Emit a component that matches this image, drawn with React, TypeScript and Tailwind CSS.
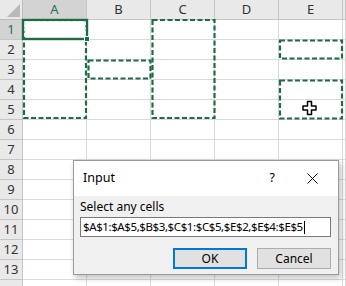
import React from 'react';

const cols = ['A', 'B', 'C', 'D', 'E', ''];
const rows = Array.from({ length: 14 }, (_, i) => i + 1);

function HeaderRow() {
  return (
    <>
      <div className="relative h-5 border-r border-b border-[#bdbdbd] bg-[#e9e9e9]">
        <svg className="absolute right-[2px] bottom-[2px]" width="13" height="13">
          <polygon points="13,0 13,13 0,13" fill="#b9b9b9" />
        </svg>
      </div>
      {cols.map((c, i) => (
        <div
          key={i}
          className={`flex h-5 items-center justify-center border-r border-b border-[#c6c6c6] text-[13px] ${
            c === 'A' ? 'bg-[#d3d3d3] text-[#217346]' : 'bg-[#e9e9e9] text-[#333]'
          }`}
        >
          {c}
        </div>
      ))}
    </>
  );
}

function Row({ n }: { n: number }) {
  return (
    <>
      <div
        className={`flex h-5 items-center justify-center border-r border-b border-[#c6c6c6] text-[13px] ${
          n === 1 ? 'bg-[#d3d3d3] text-[#217346]' : 'bg-[#e9e9e9] text-[#333]'
        }`}
      >
        {n < 14 ? n : ''}
      </div>
      {cols.map((_, i) => (
        <div key={i} className="h-5 border-r border-b border-[#dadada] bg-white" />
      ))}
    </>
  );
}

function MarchingAnts() {
  const green = '#1f6b45';
  const dash = '5 2.5';
  return (
    <svg className="pointer-events-none absolute left-0 top-0" width="346" height="286">
      <g fill="none" stroke={green} strokeWidth="2.2" strokeDasharray={dash}>
        <rect x="24" y="20" width="62" height="98" />
        <rect x="88.5" y="60.5" width="62" height="18" />
        <rect x="152.5" y="20" width="62" height="98" />
        <rect x="280" y="40.5" width="62" height="18" />
        <rect x="280" y="80.5" width="62" height="38" />
      </g>
      {/* active cell */}
      <rect x="23" y="20" width="64" height="19" fill="none" stroke={green} strokeWidth="2.4" />
      <path d="M24.5 21.5 H85.5 V37 M24.5 21.5 V37" fill="none" stroke="#fff" strokeWidth="0.8" strokeDasharray="4 2" />
      <rect x="84.5" y="36.5" width="5" height="5" fill={green} stroke="#fff" strokeWidth="1" />
      {/* cursor */}
      <path
        d="M307.5 101.5 h4 v4.5 h4.5 v4 h-4.5 v4.5 h-4 v-4.5 h-4.5 v-4 h4.5 z"
        fill="#fff"
        stroke="#000"
        strokeWidth="1.5"
        strokeLinejoin="round"
      />
    </svg>
  );
}

function Dialog() {
  return (
    <div className="absolute left-[73px] top-[160px] flex h-[115px] w-[266px] flex-col border border-[#9a9a9a] bg-[#f0f0f0] shadow-[2px_3px_6px_rgba(0,0,0,0.25)]">
      <div className="flex h-[35px] items-center bg-white text-[12.5px] text-black">
        <span className="ml-[9px] flex-1">Input</span>
        <span className="mr-[32px]">?</span>
        <svg className="mr-[20px]" width="11" height="11" viewBox="0 0 11 11">
          <path d="M0.5 0.5 L10.5 10.5 M10.5 0.5 L0.5 10.5" stroke="#111" strokeWidth="1" />
        </svg>
      </div>
      <div className="flex flex-1 flex-col px-[6px] text-[12px] text-black">
        <div className="mt-[4px] leading-[14px]">Select any cells</div>
        <div className="mt-[3px] flex h-[20px] w-[251px] items-center border border-[#7a7a7a] bg-white pl-[2px] text-[11.5px] tracking-[-0.4px]">
          <span>$A$1:$A$5,$B$3,$C$1:$C$5,$E$2,$E$4:$E$5</span>
          <span className="ml-[1px] h-[13px] w-px bg-black" />
        </div>
        <div className="mt-[11px] flex gap-[10px] pl-[93px]">
          <button className="flex h-[21px] w-[74px] items-center justify-center border-2 border-[#0078d7] bg-[#e1e1e1] text-[12px]">
            OK
          </button>
          <button className="flex h-[21px] w-[74px] items-center justify-center border border-[#adadad] bg-[#e1e1e1] text-[12px]">
            Cancel
          </button>
        </div>
      </div>
    </div>
  );
}

export default function App() {
  return (
    <div
      className="relative h-[286px] w-[346px] overflow-hidden bg-white"
      style={{ fontFamily: '"Noto Sans", "Open Sans", sans-serif' }}
    >
      <div className="grid grid-cols-[23px_64px_64px_64px_64px_64px_1fr]">
        <HeaderRow />
        {rows.map((n) => (
          <Row key={n} n={n} />
        ))}
      </div>
      <MarchingAnts />
      <Dialog />
    </div>
  );
}
